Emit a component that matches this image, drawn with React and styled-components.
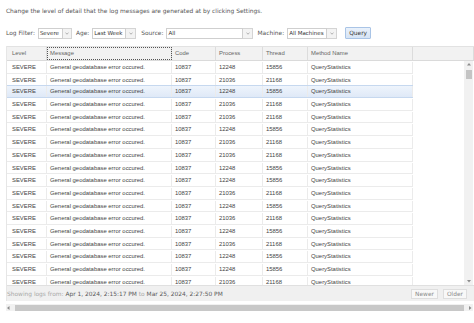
import React from 'react'
import styled, { createGlobalStyle } from 'styled-components'

const GlobalStyle = createGlobalStyle`
  html, body {
    margin: 0;
    padding: 0;
    background: #fff;
    font-family: "DejaVu Sans", Verdana, sans-serif;
  }
`

const Page = styled.div`
  width: 474px;
  height: 323px;
  overflow: hidden;
  padding-left: 6px;
  box-sizing: border-box;
`

const Intro = styled.p`
  margin: 0;
  padding-top: 7px;
  font-size: 5.9px;
  line-height: 8px;
  color: #555;
  white-space: nowrap;
`

const Toolbar = styled.div`
  display: flex;
  align-items: center;
  margin-top: 12px;
  height: 12px;
`

const Label = styled.span`
  font-size: 5.9px;
  color: #555;
  margin-right: 3px;
  white-space: nowrap;
`

const SelectBox = styled.div`
  display: flex;
  height: 11px;
  margin-right: ${p => p.$gap}px;
`

const SelectValue = styled.div`
  width: ${p => p.$w}px;
  box-sizing: border-box;
  border: 1px solid #cfcfcf;
  background: #fff;
  font-size: 5.5px;
  line-height: 9px;
  padding-left: 1px;
  color: #333;
  white-space: nowrap;
  overflow: hidden;
`

const SelectArrow = styled.div`
  width: ${p => p.$w || 9}px;
  box-sizing: border-box;
  border: 1px solid #d4d4d4;
  border-left: none;
  background: #f3f3f3;
  display: flex;
  align-items: center;
  justify-content: center;
`

const QueryButton = styled.button`
  width: 26px;
  height: 12px;
  margin: 0 0 0 5px;
  padding: 0;
  border: 1px solid #a9c4e6;
  border-radius: 1px;
  background: linear-gradient(#e9f1fb, #d6e4f5);
  font-family: "DejaVu Sans", Verdana, sans-serif;
  font-size: 5.9px;
  color: #333;
`

const Grid = styled.div`
  margin-top: 7px;
  width: 468px;
  border-left: 1px solid #e6e6e6;
  box-sizing: border-box;
`

const HeaderRow = styled.div`
  display: flex;
  height: 15px;
  box-sizing: border-box;
  background: #f2f2f2;
  border-top: 1px solid #e2e2e2;
  border-bottom: 1px solid #dadada;
`

const HeaderCell = styled.div`
  width: ${p => p.$w}px;
  flex: ${p => (p.$fill ? 1 : 'none')};
  box-sizing: border-box;
  padding-left: ${p => p.$pad}px;
  border-right: 1px solid #dcdcdc;
  font-family: "Liberation Sans", Arial, sans-serif;
  font-size: 5.9px;
  line-height: 13px;
  color: #666;
  outline: ${p => (p.$focus ? '1px dotted #555' : 'none')};
  outline-offset: -1px;
  white-space: nowrap;
`

const Body = styled.div`
  display: flex;
  height: 224px;
  overflow: hidden;
`

const Rows = styled.div`
  width: 406px;
  flex: none;
`

const Row = styled.div`
  display: flex;
  height: 12.7px;
  box-sizing: border-box;
  border-bottom: 1px solid ${p => (p.$sel ? '#c6d8ef' : '#ebebeb')};
  border-top: 1px solid ${p => (p.$sel ? '#c6d8ef' : 'transparent')};
  margin-top: ${p => (p.$sel ? '-1px' : '0')};
  background: ${p => (p.$sel ? 'linear-gradient(#eef4fc, #dfe9f7)' : '#fff')};
`

const Cell = styled.div`
  width: ${p => p.$w}px;
  flex: none;
  box-sizing: border-box;
  padding-left: ${p => p.$pad}px;
  border-right: 1px solid #ebebeb;
  font-family: "Liberation Sans", Arial, sans-serif;
  font-size: 5.9px;
  line-height: 11.5px;
  color: #444;
  white-space: nowrap;
  overflow: hidden;
`

const Spacer = styled.div`
  flex: 1;
`

const VScroll = styled.div`
  width: 9px;
  margin-right: 1px;
  background: #f1f1f1;
  display: flex;
  flex-direction: column;
  align-items: center;
`

const VThumb = styled.div`
  width: 6px;
  height: 9px;
  margin-top: 2px;
  background: #c4c4c4;
`

const ArrowSlot = styled.div`
  height: ${p => p.$h}px;
  width: ${p => (p.$w ? `${p.$w}px` : 'auto')};
  display: flex;
  align-items: center;
  justify-content: center;
`

const Footer = styled.div`
  display: flex;
  align-items: center;
  height: 16px;
  box-sizing: border-box;
  background: #f0f0f0;
  border-top: 1px solid #e0e0e0;
  padding-right: 7px;
`

const FooterText = styled.div`
  flex: 1;
  font-size: 5.9px;
  color: #5a5a5a;
  white-space: nowrap;
`

const Muted = styled.span`
  color: #a8a8a8;
`

const PageButton = styled.button`
  height: 10px;
  margin: 0 0 0 5px;
  padding: 0 3px;
  border: 1px solid #dedede;
  background: #f8f8f8;
  font-family: "DejaVu Sans", Verdana, sans-serif;
  font-size: 5.9px;
  color: #8a8a8a;
`

const HScroll = styled.div`
  margin-top: 3px;
  width: 467px;
  height: 7px;
  background: #f1f1f1;
  display: flex;
  align-items: center;
`

const HThumb = styled.div`
  flex: 1;
  height: 6px;
  background: #c8c8c8;
  margin: 0 4px;
`

const Tri = ({ dir }) => {
  const pts = {
    down: '0,0 4,0 2,2.5',
    up: '0,2.5 4,2.5 2,0',
    left: '2.5,0 2.5,4 0,2',
    right: '0,0 0,4 2.5,2'
  }[dir]
  const vertical = dir === 'up' || dir === 'down'
  return (
    <svg width={vertical ? 4 : 2.5} height={vertical ? 2.5 : 4} viewBox={vertical ? '0 0 4 2.5' : '0 0 2.5 4'}>
      <polygon points={pts} fill="#8c8c8c" />
    </svg>
  )
}

const Chevron = () => (
  <svg width="4" height="3" viewBox="0 0 4 3">
    <polyline points="0.5,0.8 2,2.2 3.5,0.8" fill="none" stroke="#9a9a9a" strokeWidth="0.8" />
  </svg>
)

const columns = [
  { key: 'level', title: 'Level', w: 40, pad: 5 },
  { key: 'message', title: 'Message', w: 125, pad: 3 },
  { key: 'code', title: 'Code', w: 44, pad: 3 },
  { key: 'process', title: 'Process', w: 47, pad: 3 },
  { key: 'thread', title: 'Thread', w: 45, pad: 3 },
  { key: 'method', title: 'Method Name', w: 105, pad: 3 }
]

const A = { process: '12248', thread: '15856' }
const B = { process: '21036', thread: '21168' }
const pattern = [A, B, A, B, B, A, B, B, A, A, B, A, B, A, B, A, A, B]

const rows = pattern.map(p => ({
  level: 'SEVERE',
  message: 'General geodatabase error occured.',
  code: '10837',
  method: 'QueryStatistics',
  ...p
}))

const Select = ({ value, w, arrow, gap }) => (
  <SelectBox $gap={gap}>
    <SelectValue $w={w}>{value}</SelectValue>
    <SelectArrow $w={arrow}><Chevron /></SelectArrow>
  </SelectBox>
)

const App = () => (
  <Page>
    <GlobalStyle />
    <Intro>Change the level of detail that the log messages are generated at by clicking Settings.</Intro>
    <Toolbar>
      <Label>Log Filter:</Label>
      <Select value="Severe" w={25} arrow={9} gap={4} />
      <Label>Age:</Label>
      <Select value="Last Week" w={34} arrow={10} gap={5} />
      <Label>Source:</Label>
      <Select value="All" w={77} arrow={10} gap={4} />
      <Label>Machine:</Label>
      <Select value="All Machines" w={40} arrow={10} gap={3} />
      <QueryButton>Query</QueryButton>
    </Toolbar>
    <Grid>
      <HeaderRow>
        {columns.map(c => (
          <HeaderCell key={c.key} $w={c.w} $pad={c.pad} $focus={c.key === 'message'}>
            {c.title}
          </HeaderCell>
        ))}
        <HeaderCell $fill $pad={0} />
      </HeaderRow>
      <Body>
        <Rows>
          {rows.map((r, i) => (
            <Row key={i} $sel={i === 2}>
              {columns.map(c => (
                <Cell key={c.key} $w={c.w} $pad={c.pad}>{r[c.key]}</Cell>
              ))}
            </Row>
          ))}
        </Rows>
        <Spacer />
        <VScroll>
          <ArrowSlot $h={7}><Tri dir="up" /></ArrowSlot>
          <VThumb />
          <Spacer />
          <ArrowSlot $h={7}><Tri dir="down" /></ArrowSlot>
        </VScroll>
      </Body>
      <Footer>
        <FooterText>
          <Muted>Showing logs from: </Muted>Apr 1, 2024, 2:15:17 PM <Muted>to</Muted> Mar 25, 2024, 2:27:50 PM
        </FooterText>
        <PageButton>Newer</PageButton>
        <PageButton>Older</PageButton>
      </Footer>
    </Grid>
    <HScroll>
      <ArrowSlot $h={7} $w={5}><Tri dir="left" /></ArrowSlot>
      <HThumb />
      <ArrowSlot $h={7} $w={5}><Tri dir="right" /></ArrowSlot>
    </HScroll>
  </Page>
)

export default App
